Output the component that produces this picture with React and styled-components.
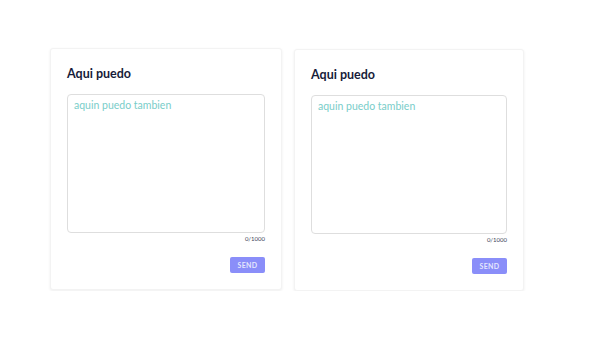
import React from "react";
import styled, { createGlobalStyle } from "styled-components";

const Global = createGlobalStyle`
  html, body { margin: 0; padding: 0; background: #fff; }
  body { font-family: Lato, "Noto Sans", sans-serif; }
`;

const Page = styled.div`
  display: flex;
  align-items: flex-start;
  gap: 12px;
  padding: 48px 0 0 50px;
`;

const Card = styled.div`
  width: ${(p) => p.$w}px;
  box-sizing: border-box;
  padding: 17px 16px 16px 16px;
  margin-top: ${(p) => p.$dy || 0}px;
  background: #fff;
  border: 1px solid #f3f3f3;
  border-radius: 3px;
  box-shadow: 0 1px 3px rgba(0, 0, 0, 0.07);
  display: flex;
  flex-direction: column;
`;

const Title = styled.h2`
  margin: 0 0 12px 0;
  font-size: 12.5px;
  line-height: 16px;
  font-weight: 700;
  color: #171c3a;
`;

const Area = styled.textarea`
  display: block;
  box-sizing: border-box;
  width: 100%;
  height: 139px;
  resize: none;
  border: 1px solid #dedede;
  border-radius: 4px;
  padding: 3px 6px;
  font-family: inherit;
  font-size: 10.5px;
  line-height: 14px;
  outline: none;
  &::placeholder { color: #79cdc9; }
`;

const Counter = styled.div`
  text-align: right;
  font-size: 6px;
  line-height: 8px;
  margin-top: 2px;
  color: #3e4358;
`;

const Actions = styled.div`
  display: flex;
  justify-content: flex-end;
  margin-top: 14px;
`;

const SendButton = styled.button`
  width: 35px;
  height: 16px;
  border: none;
  border-radius: 2px;
  background: #8a8ef9;
  color: rgba(255, 255, 255, 0.8);
  font-family: inherit;
  font-size: 7px;
  font-weight: 700;
  letter-spacing: 0.3px;
  padding: 0;
`;

function Box({ w, dy }) {
  return (
    <Card $w={w} $dy={dy}>
      <Title>Aqui puedo</Title>
      <Area placeholder="aquin puedo tambien" />
      <Counter>0/1000</Counter>
      <Actions>
        <SendButton>SEND</SendButton>
      </Actions>
    </Card>
  );
}

export default function App() {
  return (
    <>
      <Global />
      <Page>
        <Box w={232} />
        <Box w={230} dy={1} />
      </Page>
    </>
  );
}
